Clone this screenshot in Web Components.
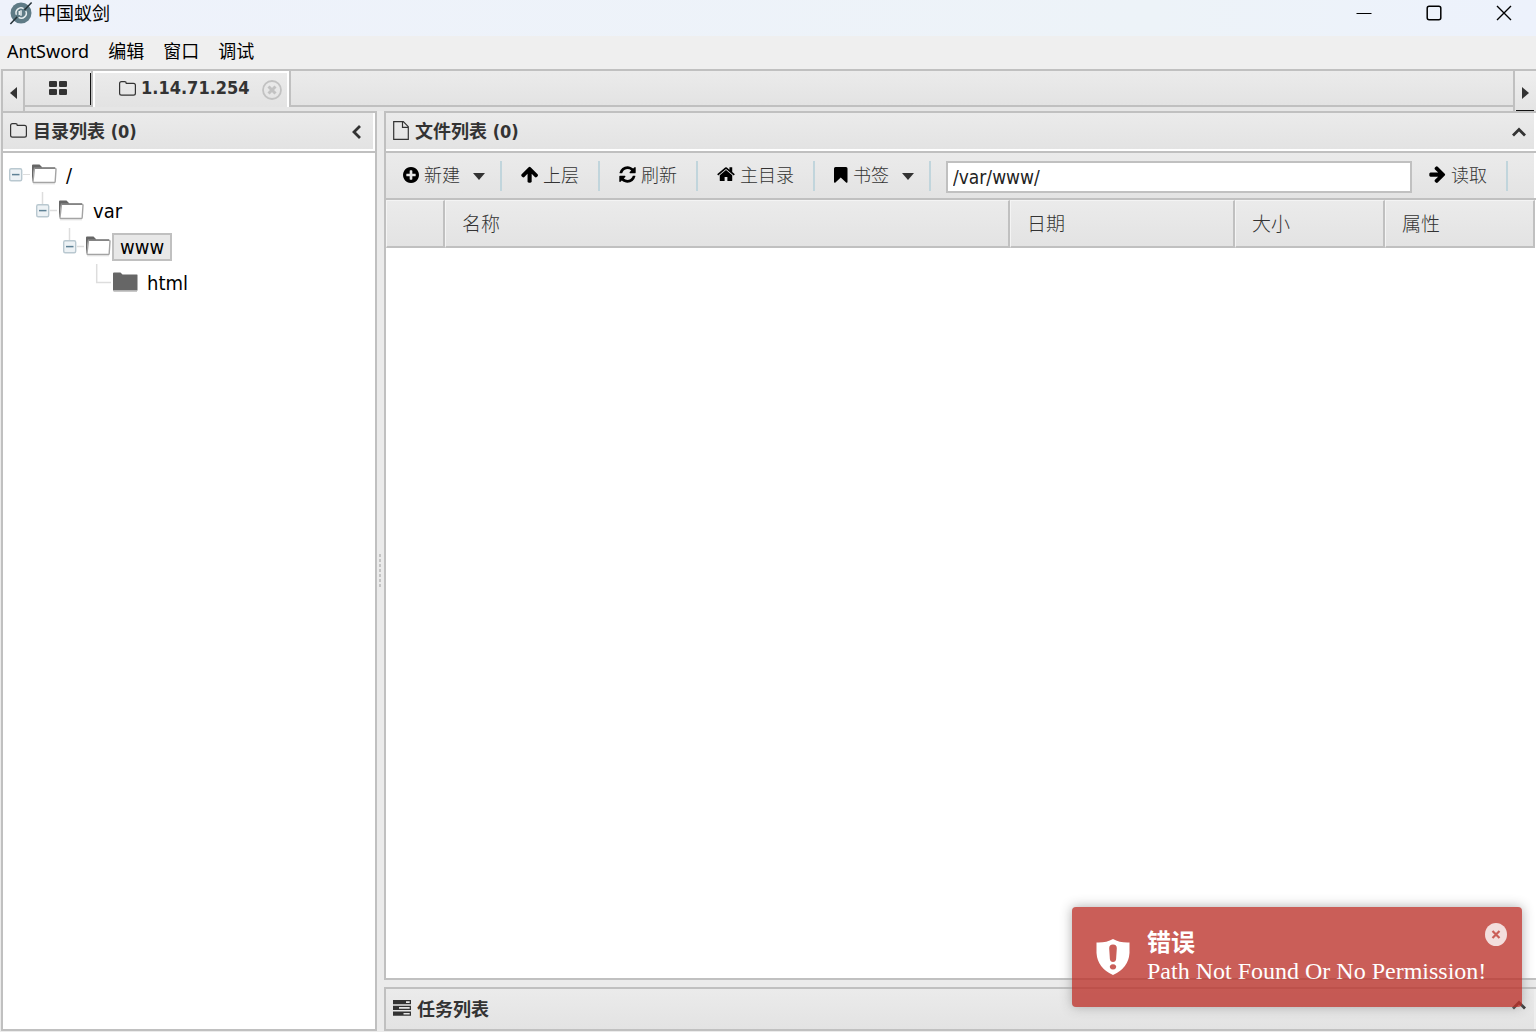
<!DOCTYPE html>
<html lang="zh-CN">
<head>
<meta charset="utf-8">
<title>中国蚁剑</title>
<style>
html,body{margin:0;height:100%;overflow:hidden;background:#ebebeb}
body{
  --line:#c0c0c0;--bar:linear-gradient(#ebebeb,#e3e3e3);--edge:2px solid var(--line);
  --ui:"DejaVu Sans Condensed","Noto Sans","Noto Sans CJK SC",sans-serif;
  --cjk:"Noto Sans","Noto Sans CJK SC",sans-serif;
  font:18px var(--cjk);color:#333}
</style>
</head>
<body>
<ant-window></ant-window>
<script>
const RESET = `*{box-sizing:border-box}button{font:inherit;color:inherit;background:none;border:0;padding:0;margin:0;display:flex;align-items:center;cursor:default}`;

class Base extends HTMLElement {
  constructor() { super(); this.attachShadow({ mode: 'open' }); }
  connectedCallback() {
    this.shadowRoot.innerHTML = `<style>${RESET}${this.css()}</style>${this.html()}`;
  }
  css() { return ''; }
  html() { return '<slot></slot>'; }
}
const define = (name, css, html) => customElements.define(name, class extends Base {
  css() { return typeof css === 'function' ? css(this) : css; }
  html() { return typeof html === 'function' ? html(this) : html; }
});

/* name: [width, height, viewBox, markup] */
const ICONS = {
  logo: [24, 24, '0 0 24 24', '<circle cx="12" cy="12" r="10.5" fill="#5f7b86"/><g fill="none" stroke="#e8eef0" stroke-width="1.5"><path d="M7.4 13.8A5 5 0 0 1 14.6 7.6M16.8 10A5 5 0 0 1 9.6 16.4"/><path d="M12 9.2v5.6M10.3 10v4"/></g><path d="M22.6 1.4L15.5 9M8.2 15.8L1.4 23" stroke="#263238" stroke-width="1.5"/>'],
  min: [16, 16, '0 0 16 16', '<path d="M.5 8.5h15" stroke="#000"/>'],
  max: [16, 16, '0 0 16 16', '<rect x="1.2" y="1.2" width="13.6" height="13.6" rx="2" fill="none" stroke="#000" stroke-width="1.5"/>'],
  close: [16, 16, '0 0 16 16', '<path d="M1 1l14 14M15 1L1 15" stroke="#000" stroke-width="1.4"/>'],
  left: [7, 12, '0 0 7 12', '<path d="M7 0v12L0 6z"/>'],
  right: [7, 12, '0 0 7 12', '<path d="M0 0v12l7-6z"/>'],
  grid: [18, 14, '0 0 18 14', '<path d="M1 0h6q1 0 1 1v4q0 1-1 1H1Q0 6 0 5V1q0-1 1-1zM11 0h6q1 0 1 1v4q0 1-1 1h-6q-1 0-1-1V1q0-1 1-1zM1 8h6q1 0 1 1v4q0 1-1 1H1q-1 0-1-1V9q0-1 1-1zM11 8h6q1 0 1 1v4q0 1-1 1h-6q-1 0-1-1V9q0-1 1-1z"/>'],
  folder: [17, 15, '0 0 17 15', '<path d="M.6 2.5q0-1.9 1.9-1.9h3q1.8 0 1.8 1.8h7.2q1.9 0 1.9 1.9v8q0 1.9-1.9 1.9h-12q-1.9 0-1.9-1.9z" fill="none" stroke="currentColor" stroke-width="1.2"/>'],
  file: [16, 19, '0 0 16 19', '<path d="M1 .7h9.3l5 5v12.6H.7V.7zM9.5 .7v5.6h5.8" fill="none" stroke="currentColor" stroke-width="1.2"/>'],
  tabclose: [20, 20, '0 0 20 20', '<circle cx="10" cy="10" r="9" fill="none" stroke="#c2c2c2" stroke-width="1.8"/><path d="M6.5 6.5l7 7m0-7l-7 7" stroke="#c2c2c2" stroke-width="3"/>'],
  chevleft: [14, 14, '0 0 14 14', '<path d="M9 1L3 7l6 6" fill="none" stroke="#333" stroke-width="2.8"/>'],
  chevup: [14, 10, '0 0 14 10', '<path d="M1 8.5l6-6 6 6" fill="none" stroke="#333" stroke-width="2.8"/>'],
  caret: [12, 7, '0 0 12 7', '<path d="M0 0h12L6 7z" fill="#333"/>'],
  plus: [16, 16, '128 128 1536 1536', '<path d="M1344 960v-128q0-26-19-45t-45-19h-256v-256q0-26-19-45t-45-19h-128q-26 0-45 19t-19 45v256h-256q-26 0-45 19t-19 45v128q0 26 19 45t45 19h256v256q0 26 19 45t45 19h128q26 0 45-19t19-45v-256h256q26 0 45-19t19-45zm320-64q0 209-103 385.5t-279.5 279.5-385.5 103-385.5-103-279.5-279.5-103-385.5 103-385.5 279.5-279.5 385.5-103 385.5 103 279.5 279.5 103 385.5z"/>'],
  arrow: [17, 17, '100 160 1580 1580', '<path d="M1600 960q0 54-37 91l-651 651q-39 37-91 37-51 0-90-37l-75-75q-38-38-38-91t38-91l293-293h-704q-52 0-84.5-37.5t-32.5-90.5v-128q0-53 32.5-90.5t84.5-37.5h704l-293-294q-38-36-38-90t38-90l75-75q38-38 90-38 53 0 91 38l651 651q37 35 37 90z"/>'],
  refresh: [17, 17, '100 100 1592 1592', '<path d="M1639 1056q0 5-1 7-64 268-268 434.5t-478 166.5q-146 0-282.5-55t-243.5-157l-129 129q-19 19-45 19t-45-19-19-45v-448q0-26 19-45t45-19h448q26 0 45 19t19 45-19 45l-137 137q71 66 161 102t187 36q134 0 250-65t186-179q11-17 53-117 8-23 30-23h192q13 0 22.5 9.5t9.5 22.5zm25-800v448q0 26-19 45t-45 19h-448q-26 0-45-19t-19-45 19-45l138-138q-148-137-349-137-134 0-250 65t-186 179q-11 17-53 117-8 23-30 23h-199q-13 0-22.5-9.5t-9.5-22.5v-7q65-268 270-434.5t480-166.5q146 0 284 55.5t245 156.5l130-129q19-19 45-19t45 19 19 45z"/>'],
  home: [18, 17, '64 150 1664 1550', '<path d="M1472 992v480q0 26-19 45t-45 19h-384v-384h-256v384h-384q-26 0-45-19t-19-45v-480q0-1 .5-3t.5-3l575-474 575 474q1 2 1 6zm223-69l-62 74q-8 9-21 11h-3q-13 0-21-7l-692-577-692 577q-12 8-24 7-13-2-21-11l-62-74q-8-10-7-23.5t11-21.5l719-599q32-26 76-26t76 26l244 204v-195q0-14 9-23t23-9h192q14 0 23 9t9 23v408l219 182q10 8 11 21.5t-7 23.5z"/>'],
  bookmark: [14, 16, '0 0 14 16', '<path d="M1.5 0h10.5q1.5 0 1.5 1.5V15q0 1-1.2.7L6.75 10.5 1.2 15.7Q0 16 0 15V1.5Q0 0 1.5 0z"/>'],
  tasks: [18, 16, '0 0 18 16', '<path fill-rule="evenodd" d="M0 0h18v4.2H0zM13 1.3v1.6h3.7V1.3zM0 5.8h18V10H0zM6 7.1v1.6h10.7V7.1zM0 11.6h18v4.2H0zM10.5 12.9v1.6h6.2v-1.6z"/>'],
  shield: [34, 36, '0 0 34 36', '<path fill="#fff" fill-rule="evenodd" d="M17 0Q24 4 33.5 3.5V14Q32.5 29 17 36 1.5 29 .5 14V3.5Q10 4 17 0zM17 5.5q-4 0-3.8 4l.7 10.5q.3 3 3.1 3t3.1-3l.7-10.5q.2-4-3.8-4zM17 25.2a3.2 2.7 0 1 0 .01 0z"/>'],
  toastclose: [22, 24, '0 0 22 24', '<ellipse cx="11" cy="11.500" rx="11" ry="11.500" fill="#fff"/><path d="M7.500 8l7 7m0-7l-7 7" stroke="#bd362f" stroke-width="2.200"/>'],
  open: [25, 21, '0 0 25 21', '<path d="M0 1.500Q0 .5 1 .5h6.500L10 3v2H2L.5 17H0z" fill="#666"/><path d="M2.500 4.200h20.500q1 0 1 1L23.200 17.500q0 1-1 1H2q-1 0-1-1z" fill="#fff" stroke="#a4a4a4" stroke-width="1.400"/><path d="M2.500 4h20.500" stroke="#777" stroke-width="1.400"/><path d="M1 19.800h22" stroke="#ddd"/>'],
  shut: [25, 20, '0 0 25 20', '<path d="M0 1.500Q0 .5 1 .5h6.500L9.500 2.500h14.500q.5 0 .5.500v15.500H0z" fill="#666"/><path d="M.5 19.300h23.500" stroke="#bbb"/>'],
  root: [27, 36, '0 0 27 36', '<path d="M20 18.500h7" stroke="#ddd"/>'],
  node: [27, 36, '0 0 27 36', '<path d="M12.500 0v12M20 18.500h7" stroke="#ddd" stroke-width="1.500"/>'],
  leaf: [27, 36, '0 0 27 36', '<path d="M12.700 0v18.500H27" stroke="#ddd" stroke-width="1.500" fill="none"/>']
};
const MINUS = '<rect x="6.700" y="12.700" width="12" height="12" rx="1.500" fill="#edf2f5" stroke="#b9c8d0" stroke-width="1.400"/><path d="M9 18.600h7.500" stroke="#5f8296" stroke-width="1.500"/>';

define('ant-icon', ':host{display:block;flex:none}svg{display:block;fill:currentColor}:host([turn]) svg{transform:rotate(-90deg)}', el => {
  const n = el.getAttribute('name'), [w, h, vb, body] = ICONS[n];
  return `<svg width="${w}" height="${h}" viewBox="${vb}" aria-hidden="true">${body}${n === 'root' || n === 'node' ? MINUS : ''}</svg>`;
});

define('ant-titlebar', `
:host{display:flex;align-items:flex-start;height:36px;padding:1px 0 0 9px;background:linear-gradient(90deg,#eef2fb,#edf3f8 75%,#edf2fc);color:#000}
.t{margin-left:5px;line-height:24px;flex:1}
nav{display:flex;gap:54px;padding:4px 24px 0 0}`, `
<ant-icon name="logo"></ant-icon><span class="t">中国蚁剑</span>
<nav><button aria-label="最小化"><ant-icon name="min"></ant-icon></button><button aria-label="最大化"><ant-icon name="max"></ant-icon></button><button aria-label="关闭"><ant-icon name="close"></ant-icon></button></nav>`);

define('ant-menubar', `
:host{display:flex;align-items:flex-start;gap:19px;height:33px;padding-left:7px;background:#efefef;color:#000}
button{line-height:30px}`, `<button>AntSword</button><button>编辑</button><button>窗口</button><button>调试</button>`);

define('ant-tabbar', `
:host{display:flex;height:42px;margin-left:1px;border-top:var(--edge);border-left:var(--edge);background:#e6e6e6}
.arrow{width:22px;justify-content:center;padding-top:4px;border-right:var(--edge);background:linear-gradient(#efefef,#e4e4e4)}
.arrow.r{width:23px;border-right:0;border-left:var(--edge);background:linear-gradient(#111,#111) 1px 100%/18px 1px no-repeat,linear-gradient(#efefef,#e4e4e4)}
.tab{height:36px;background:var(--bar);border-bottom:var(--edge);font:bold 18px/36px var(--ui);display:flex;align-items:center}
.home{width:68px;border-right:var(--edge);position:relative;justify-content:center;padding-bottom:1px}
.home::after{content:"";position:absolute;right:0;top:2px;bottom:0;width:1px;background:#111}
.on{border:2px solid #fff;border-bottom:0;padding:0 5px 4px 24px}
.on span{margin:0 12px 0 5px}.on button{margin-top:4px}
.fill{flex:1;border-left:var(--edge)}`, `
<button class="arrow" aria-label="向左"><ant-icon name="left"></ant-icon></button>
<button class="tab home" aria-label="主页"><ant-icon name="grid"></ant-icon></button>
<div class="tab on"><ant-icon name="folder"></ant-icon><span>1.14.71.254</span><button aria-label="关闭标签"><ant-icon name="tabclose"></ant-icon></button></div>
<div class="tab fill"></div>
<button class="arrow r" aria-label="向右"><ant-icon name="right"></ant-icon></button>`);

define('ant-panel', `
:host{display:flex;flex-direction:column;border:var(--edge);min-width:0}
header{display:flex;align-items:center;height:38px;flex:none;padding:0 8px 2px 7px;background:var(--bar);border-bottom:2px solid #fff;border-right:2px solid #fff;font:bold 18px/24px var(--ui)}
h2{font:inherit;margin:0 0 0 6px;padding-top:3px;flex:1}
button{padding-top:4px}
.body{flex:1;min-height:0;border-top:var(--edge);background:#fff}
:host([folded]) .body{display:none}
:host([folded]) header{border-bottom:0;border-right-color:#eee;height:40px}
:host([folded]) button{padding:0 0 6px}`, el => `
<header><ant-icon name="${el.getAttribute('icon')}"></ant-icon><h2>${el.getAttribute('heading')}</h2><button aria-label="折叠"><ant-icon name="${el.getAttribute('fold')}"></ant-icon></button></header>
<div class="body"><slot></slot></div>`);

define('ant-tree', `
:host{display:block;padding-top:3px;color:#000;font:20px var(--ui)}
ul{list-style:none;margin:0;padding:0}ul ul{padding-left:27px}
.row{display:flex;align-items:center;height:36px}
.f{width:27px;padding-left:2px;margin-right:1px}
.l{border:2px solid transparent;line-height:24px;padding:0 6px;margin-top:2px}
.sel{background:#e8e8e8;border-color:#c0c0c0}`, () => {
  const row = (line, f, t, s, kids = '') => `<li><div class="row"><ant-icon name="${line}"></ant-icon><span class="f"><ant-icon name="${f}"></ant-icon></span><span class="l ${s}">${t}</span></div>${kids && `<ul>${kids}</ul>`}</li>`;
  return `<ul>${row('root', 'open', '/', '', row('node', 'open', 'var', '', row('node', 'open', 'www', 'sel', row('leaf', 'shut', 'html', ''))))}</ul>`;
});

define('ant-tool', `
:host{display:flex;align-items:center;height:30px;border-right:2px solid #c1d5dc}
button{gap:5px;padding:0 19px 2px;line-height:28px;white-space:nowrap;font-weight:300}
ant-icon{color:#000}.c{margin:4px 0 0 8px}
:host([menu]) button{padding-right:15px}
:host([outer]) button{padding-left:17px}`, el => `
<button><ant-icon name="${el.getAttribute('icon')}" ${el.hasAttribute('turn') ? 'turn' : ''}></ant-icon><slot></slot>${el.hasAttribute('menu') ? '<ant-icon class="c" name="caret"></ant-icon>' : ''}</button>`);

define('ant-toolbar', `
:host{display:flex;align-items:center;height:45px;padding-right:26px;background:var(--bar);border-right:2px solid #fff}
input{flex:1;min-width:0;height:32px;margin:2px 0 0 15px;padding:0 5px;border:2px solid #c0c0c0;background:#fff;color:#222;font:19px var(--ui);outline:0;border-radius:0}`, `
<ant-tool icon="plus" menu outer>新建</ant-tool><ant-tool icon="arrow" turn>上层</ant-tool><ant-tool icon="refresh">刷新</ant-tool><ant-tool icon="home">主目录</ant-tool><ant-tool icon="bookmark" menu>书签</ant-tool>
<input aria-label="路径" value="/var/www/"><ant-tool icon="arrow" outer>读取</ant-tool>`);

define('ant-files', `
:host{display:block;border-top:var(--edge);padding-right:1px}
table{width:100%;table-layout:fixed;border-collapse:separate;border-spacing:0}
th{height:48px;padding:0 0 0 16px;text-align:left;font-size:19px;font-weight:300;line-height:28px;background:var(--bar);border:2px solid #c0c0c0;border-top:1px solid #f4f4f4;border-left:1px solid #f4f4f4}
.i{width:59px}.d{width:225px}.s{width:150px}`, `
<table><thead><tr><th class="i"></th><th>名称</th><th class="d">日期</th><th class="s">大小</th><th class="s">属性</th></tr></thead><tbody></tbody></table>`);

define('ant-toast', `
:host{position:absolute;right:14px;bottom:25px;width:450px;height:100px;display:flex;align-items:flex-start;padding:16px 15px 0 24px;border-radius:4px;background:#bd362f;box-shadow:0 0 12px #999;opacity:.8;color:#fff;font:24px/28px "Liberation Serif","Noto Sans CJK SC",serif}
.i{margin:16px 17px 0 0}
div{flex:1;white-space:nowrap;padding-top:7px;min-width:0}
strong,span{display:block}strong{line-height:27px}
button{opacity:.8}`, `
<ant-icon class="i" name="shield"></ant-icon><div role="alert"><strong>错误</strong><span>Path Not Found Or No Permission!</span></div><button aria-label="关闭"><ant-icon name="toastclose"></ant-icon></button>`);

define('ant-window', `
:host{display:flex;flex-direction:column;height:100vh;position:relative}
main{flex:1;min-height:0;display:flex;padding:0 0 1px 1px}
.side{width:376px;flex:none}
.grip{width:7px;flex:none;display:flex;align-items:center;justify-content:center;padding-right:2px}
.grip i{width:2px;height:35px;background:repeating-linear-gradient(#c4c4c4 0 3px,transparent 3px 5px)}
.right{flex:1;min-width:0;display:flex;flex-direction:column;gap:7px}
.right ant-panel{border-right:0}.files{flex:1;min-height:0}`, `
<ant-titlebar></ant-titlebar><ant-menubar></ant-menubar><ant-tabbar></ant-tabbar>
<main><ant-panel class="side" icon="folder" heading="目录列表 (0)" fold="chevleft"><ant-tree></ant-tree></ant-panel>
<div class="grip"><i></i></div>
<div class="right"><ant-panel class="files" icon="file" heading="文件列表 (0)" fold="chevup"><ant-toolbar></ant-toolbar><ant-files></ant-files></ant-panel>
<ant-panel folded icon="tasks" heading="任务列表" fold="chevup"></ant-panel></div></main>
<ant-toast></ant-toast>`);
</script>
</body>
</html>
